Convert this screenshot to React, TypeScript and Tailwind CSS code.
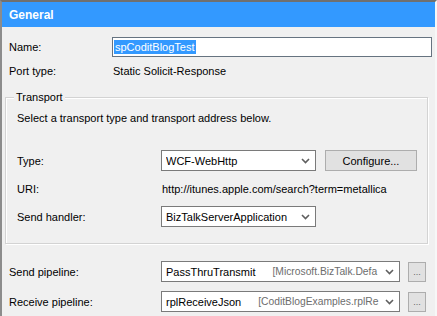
import React from "react"

const Chevron: React.FC = () => (
  <svg width="9" height="6" viewBox="0 0 9 6" className="shrink-0">
    <polyline points="1,1 4.5,4.5 8,1" fill="none" stroke="#5f5f5f" strokeWidth="1.6" />
  </svg>
)

const Select: React.FC<{ value: string; extra?: string; width: string }> = ({ value, extra, width }) => (
  <div className={`flex items-center h-[21px] bg-white border border-[#7a7a7a] pl-[4px] pr-[5px] ${width}`}>
    <div className="flex-1 flex overflow-hidden whitespace-nowrap">
      <span className="shrink-0">{value}</span>
      {extra && <span className="ml-[17px] text-[10.3px] text-[#6d6d6d]">{extra}</span>}
    </div>
    <div className="ml-[3px]">
      <Chevron />
    </div>
  </div>
)

const DotsButton: React.FC = () => (
  <button className="ml-[8px] w-[18px] h-[20px] flex items-end justify-center pb-[4px] bg-[#e1e1e1] border border-[#adadad] text-[9px] leading-[9px] text-[#666]">
    ...
  </button>
)

const App: React.FC = () => {
  return (
    <div
      className="w-[437px] h-[316px] overflow-hidden bg-[#f0f0f0] border-l-2 border-t-2 border-r-2 border-l-[#8c8c8c] border-t-[#707070] border-r-[#f7f7f7] text-[11px] leading-[14px] text-black"
      style={{ fontFamily: '"Liberation Sans", Arial, sans-serif' }}
    >
      <div className="h-[25px] bg-[#3399ff] flex items-center pl-[7px] text-white font-bold text-[12px]">
        General
      </div>

      <div className="flex items-center h-[20px] mt-[10px]">
        <span className="w-[110px] pl-[7px]">Name:</span>
        <div className="flex items-center w-[320px] h-[20px] bg-white border border-[#667380] pl-[1px]">
          <span className="bg-[#3399ff] text-white px-[1px]">spCoditBlogTest</span>
        </div>
      </div>

      <div className="flex items-center h-[20px] mt-[4px]">
        <span className="w-[110px] pl-[7px]">Port type:</span>
        <span className="pl-[1px]">Static Solicit-Response</span>
      </div>

      <div className="relative ml-[3px] mt-[16px] w-[423px] h-[147px] border border-[#d3d3d3] shadow-[inset_1px_1px_0_#ffffff,1px_1px_0_#ffffff] pl-[11px] pt-[13px]">
        <span className="absolute -top-[8px] left-[8px] bg-[#f0f0f0] px-[2px]">Transport</span>
        <div>Select a transport type and transport address below.</div>

        <div className="flex items-center h-[21px] mt-[25px]">
          <span className="w-[144px]">Type:</span>
          <Select value="WCF-WebHttp" width="w-[155px]" />
          <button className="ml-[9px] w-[92px] h-[21px] bg-[#e1e1e1] border border-[#adadad] text-[11px]">
            Configure...
          </button>
        </div>

        <div className="flex items-center h-[21px] mt-[7px]">
          <span className="w-[144px]">URI:</span>
          <span className="pl-[1px]">http://itunes.apple.com/search?term=metallica</span>
        </div>

        <div className="flex items-center h-[21px] mt-[7px]">
          <span className="w-[144px]">Send handler:</span>
          <Select value="BizTalkServerApplication" width="w-[155px]" />
        </div>
      </div>

      <div className="flex items-center h-[21px] mt-[17px]">
        <span className="w-[159px] pl-[7px]">Send pipeline:</span>
        <Select value="PassThruTransmit" extra="[Microsoft.BizTalk.Defa" width="w-[239px]" />
        <DotsButton />
      </div>

      <div className="flex items-center h-[21px] mt-[9px]">
        <span className="w-[159px] pl-[7px]">Receive pipeline:</span>
        <Select value="rplReceiveJson" extra="[CoditBlogExamples.rplRe" width="w-[239px]" />
        <DotsButton />
      </div>
    </div>
  )
}

export default App
